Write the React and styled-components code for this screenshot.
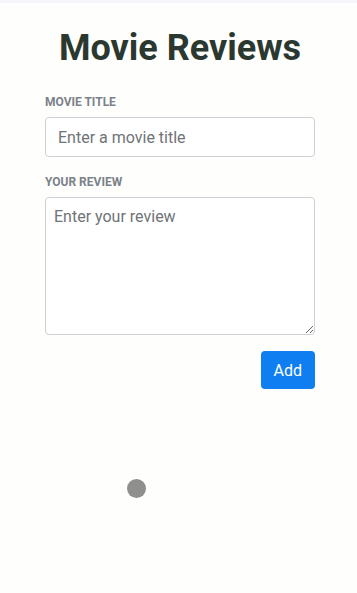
import React, { useState } from "react";
import styled, { createGlobalStyle } from "styled-components";

const GlobalStyle = createGlobalStyle`
  html, body {
    margin: 0;
    padding: 0;
    background: #fefefc;
    font-family: Roboto, "Liberation Sans", sans-serif;
  }
  * { box-sizing: border-box; }
`;

const Page = styled.div`
  position: relative;
  min-height: 593px;
  border-top: 3px solid #f4f6fb;
`;

const Container = styled.div`
  width: 270px;
  margin-left: 45px;
  padding-top: 22px;
`;

const Title = styled.h1`
  margin: 0 0 24px;
  text-align: center;
  font-size: 36px;
  font-weight: 700;
  color: #2b3830;
  line-height: 46px;
`;

const Field = styled.div`
  display: flex;
  flex-direction: column;
  margin-bottom: ${(p) => p.$space || 0}px;
`;

const Label = styled.label`
  font-size: 12px;
  font-weight: 700;
  color: #7b8289;
  text-transform: uppercase;
  margin-bottom: 8px;
  line-height: 14px;
`;

const Input = styled.input`
  height: 40px;
  width: 100%;
  border: 1px solid #cdd0d4;
  border-radius: 4px;
  padding: 0 12px;
  font-family: inherit;
  font-size: 16px;
  color: #333;
  background: #fff;
  &::placeholder { color: #6f7377; }
`;

const TextArea = styled.textarea`
  height: 138px;
  width: 100%;
  border: 1px solid #cdd0d4;
  border-radius: 4px;
  padding: 8px 8px;
  font-family: inherit;
  font-size: 16px;
  line-height: 22px;
  color: #333;
  background: #fff;
  resize: vertical;
  display: block;
  &::placeholder { color: #6f7377; }
`;

const Actions = styled.div`
  display: flex;
  justify-content: flex-end;
`;

const Button = styled.button`
  height: 38px;
  padding: 0 13px;
  border: none;
  border-radius: 4px;
  background: #0e7ef1;
  color: #fff;
  font-family: inherit;
  font-size: 16px;
  cursor: pointer;
`;

const CursorDot = styled.div`
  position: absolute;
  left: 127px;
  top: 476px;
  width: 19px;
  height: 19px;
  border-radius: 50%;
  background: #8f8f8d;
`;

export default function App() {
  const [title, setTitle] = useState("");
  const [review, setReview] = useState("");
  return (
    <Page>
      <GlobalStyle />
      <Container>
        <Title>Movie Reviews</Title>
        <Field $space={18}>
          <Label>Movie Title</Label>
          <Input
            placeholder="Enter a movie title"
            value={title}
            onChange={(e) => setTitle(e.target.value)}
          />
        </Field>
        <Field $space={16}>
          <Label>Your Review</Label>
          <TextArea
            placeholder="Enter your review"
            value={review}
            onChange={(e) => setReview(e.target.value)}
          />
        </Field>
        <Actions>
          <Button>Add</Button>
        </Actions>
      </Container>
      <CursorDot />
    </Page>
  );
}
